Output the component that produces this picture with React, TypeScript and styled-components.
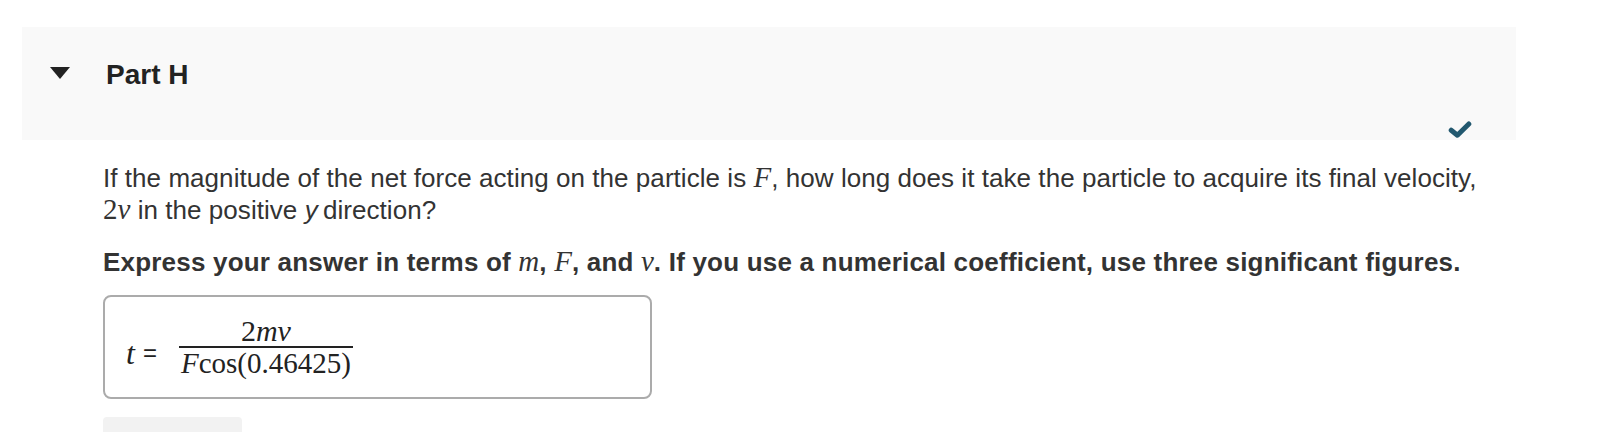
import styled, { createGlobalStyle } from 'styled-components';

const GlobalStyle = createGlobalStyle`
  html, body {
    margin: 0;
    padding: 0;
    background: #fff;
    overflow: hidden;
  }
  body {
    font-family: 'Liberation Sans', Arial, sans-serif;
    color: #333;
  }
`;

const Page = styled.div`
  padding: 27px 0 0 22px;
  width: 1494px;
`;

const PartHeader = styled.div`
  display: flex;
  flex-direction: column;
  height: 113px;
  box-sizing: border-box;
  padding: 32px 44px 2px 28px;
  background: #f9f9f9;
`;

const TitleRow = styled.div`
  display: flex;
  align-items: center;
  gap: 36px;
  height: 32px;
`;

const Caret = styled.span`
  width: 0;
  height: 0;
  margin-top: -4px;
  border-left: 10px solid transparent;
  border-right: 10px solid transparent;
  border-top: 12px solid #222;
`;

const Title = styled.h2`
  margin: 0;
  font-size: 28px;
  line-height: 32px;
  font-weight: 700;
  color: #222;
`;

const Status = styled.div`
  display: flex;
  justify-content: flex-end;
  margin-top: 30px;
`;

const Body = styled.div`
  padding-left: 81px;
`;

const Question = styled.p`
  margin: 22px 0 0;
  font-size: 26px;
  line-height: 31px;
  letter-spacing: 0.05px;
  color: #333;
`;

const Instruction = styled.p`
  margin: 20px 0 0;
  font-size: 26px;
  line-height: 31px;
  letter-spacing: 0.2px;
  font-weight: 700;
  color: #333;
`;

const MathVar = styled.span<{ $upright?: boolean }>`
  font-family: 'Liberation Serif', 'Times New Roman', serif;
  font-style: ${(p) => (p.$upright ? 'normal' : 'italic')};
  font-weight: 400;
  font-size: 29px;
  letter-spacing: 0;
`;

const SansItalic = styled.span`
  font-style: italic;
  margin-right: -2px;
`;

const AnswerBox = styled.div`
  display: flex;
  align-items: center;
  width: 549px;
  height: 104px;
  box-sizing: border-box;
  margin-top: 17px;
  padding: 0 0 0 21px;
  border: 2px solid #ababab;
  border-radius: 8px;
  font-family: 'Liberation Serif', 'Times New Roman', serif;
  font-size: 29px;
  color: #222;
`;

const Lhs = styled.span`
  display: flex;
  align-items: center;
  gap: 8px;
  margin-top: 12px;
  margin-right: 22px;
`;

const LhsVar = styled.i`
  font-size: 32px;
`;

const Equals = styled.span`
  font-family: 'Liberation Sans', Arial, sans-serif;
  font-size: 24px;
`;

const Fraction = styled.span`
  display: inline-flex;
  flex-direction: column;
  align-items: center;
`;

const Numerator = styled.span`
  line-height: 31px;
  padding: 0 4px;
  font-size: 30px;
`;

const Denominator = styled.span`
  line-height: 31px;
  padding: 0 2px;
  border-top: 2px solid #222;
`;

const SubmitStub = styled.div`
  width: 139px;
  height: 30px;
  margin-top: 18px;
  border-radius: 4px;
  background: #f2f2f2;
`;

const CheckIcon = () => (
  <svg width="24" height="17" viewBox="0 0 24 17" fill="none">
    <path
      d="M3.2 9.2 L9.4 14.2 L20.8 3"
      stroke="#22586f"
      strokeWidth="5"
      strokeLinecap="round"
      strokeLinejoin="round"
    />
  </svg>
);

export default function App() {
  return (
    <>
      <GlobalStyle />
      <Page>
        <PartHeader>
          <TitleRow>
            <Caret />
            <Title>Part H</Title>
          </TitleRow>
          <Status>
            <CheckIcon />
          </Status>
        </PartHeader>
        <Body>
          <Question>
            If the magnitude of the net force acting on the particle is <MathVar>F</MathVar>, how long
            does it take the particle to acquire its final velocity,
            <br />
            <MathVar $upright>2</MathVar>
            <MathVar>v</MathVar> in the positive <SansItalic>y</SansItalic> direction?
          </Question>
          <Instruction>
            Express your answer in terms of <MathVar>m</MathVar>, <MathVar>F</MathVar>, and{' '}
            <MathVar>v</MathVar>. If you use a numerical coefficient, use three significant figures.
          </Instruction>
          <AnswerBox>
            <Lhs>
              <LhsVar>t</LhsVar>
              <Equals>=</Equals>
            </Lhs>
            <Fraction>
              <Numerator>
                2<i>mv</i>
              </Numerator>
              <Denominator>
                <i>F</i>cos(0.46425)
              </Denominator>
            </Fraction>
          </AnswerBox>
          <SubmitStub />
        </Body>
      </Page>
    </>
  );
}
